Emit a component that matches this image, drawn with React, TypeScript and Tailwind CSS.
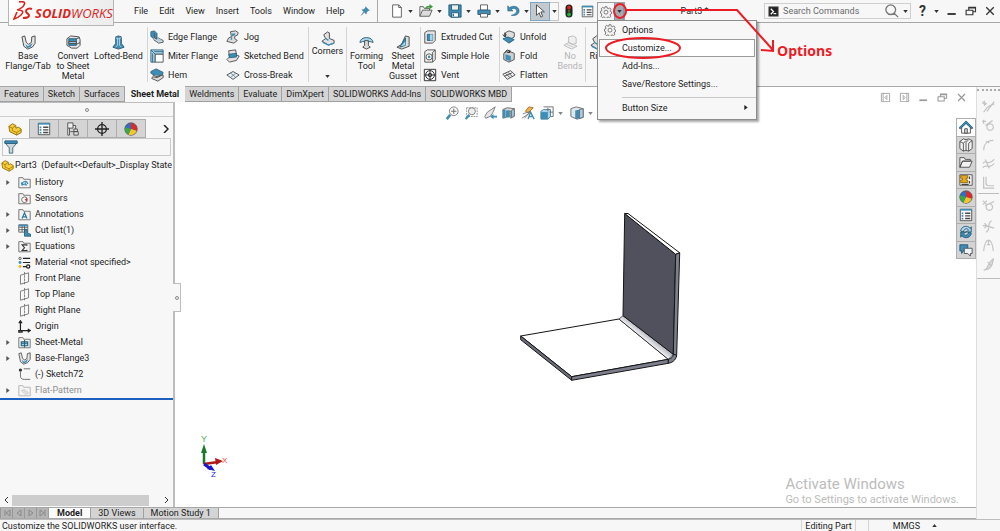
import { useState } from 'react';
import type { ReactNode } from 'react';

const S = '#4a4a4a';
const B = '#3d8db5';
const L = '#a9d3ea';

// All drawings share a 16x16 box
const icons: Record<string, ReactNode> = {
  base: (
    <>
      <path d="M1 2l3-1 1.500 6.500L8 10l3-2 .5-6L15 1v8l-3 4-5 2-4-3z" fill="#e4e4e4" stroke={S} />
      <path d="M4.500 9.500l3 2.500 5-3.500-2 4-4 1.500z" fill={B} />
    </>
  ),
  convert: (
    <>
      <path d="M1 4l4-3 9 1 1 3v6l-3 3H6l-5-3z" fill="#e8e8e8" stroke={S} />
      <path d="M3 4h8v7H3z" fill={B} stroke="#27607c" />
      <path d="M3 7h8v2H3zM11 4l3-1M11 10l4-2" fill={L} stroke={S} />
    </>
  ),
  loft: (
    <>
      <path d="M5 2l3-1 3 1v7l3 4-6 2-6-2 3-4z" fill={B} stroke="#39596b" />
      <path d="M7 3v8l-2 2M9 3v8l2 2M5 3l3 1 3-1" fill="none" stroke={L} />
    </>
  ),
  edge: (
    <>
      <path d="M1 2l4-1 3 3v6l-3 1-4-4z" fill={B} stroke="#2c637e" />
      <path d="M5 4v5l3 2 1-2 6 3v2l-5 1-6-4" fill="#dcdcdc" stroke={S} />
      <path d="M9 9l5 3-3 1-4-2z" fill={L} />
    </>
  ),
  miter: (
    <>
      <path d="M1 1h14v5H6v9H1z" fill={L} stroke="#2c637e" />
      <path d="M6 6h9v9H6z" fill="#fff" stroke={S} />
      <path d="M1 1l5 5M3 5v10M5 3h10" fill="none" stroke="#2c637e" />
    </>
  ),
  hem: (
    <>
      <path d="M1 4l6-3 8 4-1 3-7 1-6-3z" fill={B} stroke="#2c637e" />
      <path d="M3 8l5 2 7-2v3l-6 4-7-3 1-2 5 1 4-2" fill="#dcdcdc" stroke={S} />
    </>
  ),
  jog: (
    <>
      <path d="M5 2l6-1 3 2-1 3-3 1v3l3 2-4 3-8-2 2-4 3-1V6z" fill="#dcdcdc" stroke={S} />
      <path d="M6 4h5l-1 2-3 1v4H5l2-5z" fill={B} />
    </>
  ),
  sbend: (
    <>
      <path d="M3 2l8-1 1 6 3 1-3 5-8 2-3-3 3-3z" fill="#e2e2e2" stroke={S} />
      <path d="M3 6l9-1v4l-8 1z" fill={B} stroke="#2c637e" />
    </>
  ),
  cross: (
    <>
      <path d="M1 8l7-4 7 4-7 5z" fill="#e4eef2" stroke={S} />
      <path d="M5 5.500l6 5M11 6l-6 5" stroke="#6f8894" fill="none" />
    </>
  ),
  corners: (
    <>
      <path d="M4 4l4-3 2 1v6l5 2v3l-6 2-7-4 4-3z" fill="#e2e2e2" stroke={S} />
      <path d="M3 12l6 3 6-2M6 8l3 2" fill="none" stroke={B} strokeWidth="1.500" />
    </>
  ),
  forming: (
    <>
      <path d="M1 8c0-7 14-7 14 0l-3-1H4z" fill={L} stroke="#2c637e" />
      <path d="M6 6h4v5l2 2-4 2-4-2 2-2z" fill="#dadada" stroke={S} />
    </>
  ),
  gusset: (
    <>
      <path d="M10 1l4 1v10l-8 3-5-2 5-3z" fill="#dcdcdc" stroke={S} />
      <path d="M10 3v8l-6 2z" fill={B} stroke="#2c637e" />
      <path d="M5 12l5-5v4z" fill={L} />
    </>
  ),
  cut: (
    <>
      <path d="M2 3l3-2h9v11l-3 3H2z" fill="#e6e6e6" stroke={S} />
      <path d="M5 5h6v7H5z" fill={B} stroke="#2c637e" />
      <path d="M8 5h3v7H8z" fill={L} />
    </>
  ),
  hole: (
    <>
      <path d="M2 3l3-2h9v11l-3 3H2zM11 15V4l3-3" fill="#f0f0f0" stroke={S} />
      <circle cx="7" cy="9" r="3.500" fill="#fff" stroke={S} />
      <circle cx="7" cy="9" r="1.500" fill={B} />
    </>
  ),
  vent: (
    <>
      <path d="M1.500 1.500h13v13h-13z" fill="#f4f4f4" stroke="#222" />
      <circle cx="8" cy="8" r="5" fill="none" stroke="#222" />
      <circle cx="8" cy="8" r="2" fill="none" stroke="#222" />
      <path d="M8 2v12M2 8h12" stroke="#222" />
    </>
  ),
  unfold: (
    <>
      <path d="M4 3l4-2 6 2v5l-4 2-6-2z" fill="#dedede" stroke={S} />
      <path d="M1 10l6-2 7 3-6 4z" fill={B} stroke="#2c637e" />
      <path d="M3 3v4M1 5l2 3 2-3" fill="none" stroke="#333" />
    </>
  ),
  fold: (
    <>
      <path d="M2 5l5-3 7 3v7l-6 3-6-3z" fill="#cfcfcf" stroke={S} />
      <path d="M4 6l6 2v6l-6-2z" fill={B} />
      <path d="M3 4l3-3 3 2M9 1v3H6" fill="none" stroke="#222" />
    </>
  ),
  flatten: (
    <>
      <path d="M1 7l9-4 5 5-9 5z" fill="#eee" stroke={S} />
      <path d="M4 6l5 5M7 5l5 5M2.500 9.500l9-4" stroke={S} fill="none" />
    </>
  ),
  nobends: (
    <>
      <path d="M6 2l5-1 3 2v6l-4 1-4-2zM1 11l5-3 9 4-6 3z" fill="#efefef" stroke="#bbb" />
      <path d="M4 10l7 3" stroke="#c8c8c8" />
    </>
  ),
  newdoc: <path d="M3 1h7l3 3v11H3zM10 1v3h3" fill="#fff" stroke="#555" />,
  open: (
    <>
      <path d="M1 14V3h4l1 2h6v3" fill="#f3f3f3" stroke="#555" />
      <path d="M1 14l3-7h11l-3 7z" fill="#dcdcdc" stroke="#555" />
      <path d="M7 6c0-3 2-4 5-4V0l4 3-4 3V4c-2 0-3 0-5 2z" fill="#3c9a3c" />
    </>
  ),
  save: (
    <>
      <path d="M1 1h14v14H3l-2-2z" fill={B} stroke="#225a78" />
      <path d="M4 1h8v6H4z" fill="#eee" stroke="#225a78" />
      <path d="M4 10h8v5H4z" fill="#fff" stroke="#225a78" />
      <path d="M6 11v3" stroke="#225a78" strokeWidth="1.500" />
    </>
  ),
  print: (
    <>
      <path d="M4 1h8v6H4z" fill="#fff" stroke="#555" />
      <path d="M1 7h14v5H1z" fill={B} stroke="#225a78" />
      <path d="M4 11h8v4H4z" fill="#fff" stroke="#555" />
    </>
  ),
  undo: <path d="M2 2v6h6L6 6c4-2 7 0 6 3-1 2-3 3-6 4 6 1 9-2 9-5 0-5-6-7-11-4z" fill={B} stroke="#225a78" strokeWidth=".6" />,
  cursor: <path d="M4 1v12l3-3 2 5 2-1-2-5h4z" fill="#fff" stroke="#444" />,
  traffic: (
    <>
      <rect x="4" y="0.500" width="8" height="15" rx="4" fill="#222" />
      <circle cx="8" cy="4" r="2.200" fill="#e02020" />
      <circle cx="8" cy="8" r="1.500" fill="#5d5a20" />
      <circle cx="8" cy="12" r="2.200" fill="#1fae3a" />
    </>
  ),
  proplist: (
    <>
      <path d="M1.500 1.500h13v13h-13z" fill="#fff" stroke={S} />
      <path d="M1 1h14v2H1z" fill={B} />
      <path d="M3 6h2M3 9h2M3 12h2" stroke={B} strokeWidth="2" />
      <path d="M7 6h6M7 9h6M7 12h6" stroke={S} strokeWidth="1.500" />
    </>
  ),
  gear: (
    <>
      <path
        d="M6.700 1h2.600l.5 2 1.300.6 1.900-1.100 1.700 1.800-1 1.900.5 1.300 1.300.4v2.300l-1.500.5-.5 1.300 1 1.900-1.800 1.700-1.800-1-1.300.5-.4 1.400H6.800l-.5-1.500-1.300-.5-1.800 1.100-1.800-1.800 1-1.800L1.900 10 .6 9.500V7l1.500-.4.5-1.300-1-1.800 1.800-1.700 1.800 1L6.200 3z"
        fill="#f2f2f2"
        stroke="#555"
      />
      <circle cx="8" cy="8.200" r="2.600" fill="#fff" stroke="#555" />
    </>
  ),
  pin: <path d="M9 1l6 6-2 .5-2.500 2.500-.5 3-3-3-5 5 4-6-3-3 3-.5L8.500 3z" fill={B} stroke="#2b6f95" strokeWidth=".6" />,
  zoomfit: (
    <>
      <path d="M6 10l-4 5" stroke={B} strokeWidth="3" />
      <circle cx="10" cy="6" r="5" fill="#f6f6f6" stroke="#777" />
      <path d="M10 3v6M7 6h6" stroke="#666" />
    </>
  ),
  zoomarea: (
    <>
      <path d="M3 2h12v10H3z" fill="none" stroke="#888" strokeDasharray="2 1" />
      <path d="M6 10l-4 5" stroke={B} strokeWidth="2.500" />
      <circle cx="9" cy="6" r="4" fill="#eee" stroke="#777" />
    </>
  ),
  prevview: (
    <>
      <path d="M14 1L5 7l-3 5 1 2 5-2 3-4z" fill="#e5e5e5" stroke="#777" />
      <path d="M8 12l4-3v2h4v2h-4v2z" fill={B} />
    </>
  ),
  section: (
    <>
      <path d="M1 4l5-2 8 1v8l-4 3V6H5v7l-4 1z" fill="#d5d5d5" stroke="#666" />
      <path d="M5 5h4v8H5zM1 4h3v9H1z" fill={B} />
      <path d="M11 5l3-2v9l-3 1z" fill={L} stroke="#666" />
    </>
  ),
  annview: (
    <>
      <path d="M5 6l4-5 5 1-6 6z" fill="#f0b34c" stroke="#a26a1c" />
      <path d="M2 9l9-3-7 8M1 14l9-6" fill="none" stroke="#777" />
      <path d="M8 15l3-8 4 8M9 12h5" fill="none" stroke={B} strokeWidth="1.500" />
    </>
  ),
  orient: (
    <>
      <path d="M4 1h11v11h-4" fill="none" stroke="#666" />
      <path d="M1 6l3-2h8v8l-3 3H1z" fill={L} stroke="#4e7f99" />
      <path d="M1 7h8v8H1z" fill={B} />
      <path d="M9 2v4M15 7h-4" stroke="#666" />
    </>
  ),
  cube: (
    <>
      <path d="M1 3l6-2 8 2v10l-7 2-7-3z" fill="#dfe7eb" stroke="#666" />
      <path d="M6 5l5-1v9l-3 2-2-1z" fill={B} />
      <path d="M11 4l4-1v10l-4 1z" fill={L} stroke="#666" />
    </>
  ),
  part: (
    <>
      <path d="M1 5l4-3 4 2v3l3-1 3 2v4l-5 3-8-4z" fill="#f7cf3c" stroke="#8a6500" />
      <path d="M1 5l4 2 4-3M5 7v3l5 2 5-3M10 12v3" fill="none" stroke="#a67b00" />
    </>
  ),
  config: (
    <>
      <path d="M2 1h6v6H2zM4 7v8H2V7M8 4h3v4M5 11h4" fill="#eee" stroke={S} />
      <path d="M9 8h4v3H9zM9 11h5v4H9z" fill="#ddd" stroke={S} />
    </>
  ),
  target: (
    <>
      <circle cx="8" cy="8" r="5" fill="none" stroke="#222" strokeWidth="1.500" />
      <path d="M8 0v16M0 8h16" stroke="#222" strokeWidth="1.500" />
    </>
  ),
  ball: (
    <>
      <circle cx="8" cy="8" r="7" fill="#2b70c9" stroke="#444" />
      <path d="M8 8V1a7 7 0 0 1 6.500 9z" fill="#de2b23" />
      <path d="M8 8l6.500 2A7 7 0 0 1 5 14.300z" fill="#f5c52c" />
      <path d="M8 8l-3 6.300A7 7 0 0 1 1.500 6z" fill="#3fa646" />
    </>
  ),
  funnel: (
    <>
      <path d="M1 3h14l-5 6v6H6V9z" fill="#cfd6d9" stroke="#33667f" />
      <path d="M1 1h14v3H1z" fill={B} stroke="#225a78" />
    </>
  ),
  material: (
    <>
      <path d="M6 3h9M6 8h9M6 13h4" stroke="#222" strokeWidth="1.500" />
      <circle cx="2.500" cy="3" r="1.500" fill="#ddd" stroke="#555" />
      <circle cx="2.500" cy="8" r="1.800" fill={B} />
      <circle cx="2.500" cy="13" r="1.800" fill="#f1b81f" />
      <circle cx="12.500" cy="13" r="2" fill="#fff" stroke="#222" strokeWidth="1.500" />
    </>
  ),
  plane: (
    <>
      <path d="M3 4l10-3v11L3 15z" fill="none" stroke="#666" />
      <path d="M8 0v16" stroke="#666" strokeDasharray="3 1" />
    </>
  ),
  origin: <path d="M3 2v11h11M1 4l2-3 2 3M12 11l3 2-3 2M1 13h4v2H1z" fill="none" stroke="#222" strokeWidth="1.500" />,
  sketch: (
    <>
      <path d="M15 1H7M3 5v5c0 3 2 4 5 4h7" fill="none" stroke="#555" />
      <circle cx="3" cy="2.500" r="2" fill="#333" />
    </>
  ),
  cutlist: (
    <>
      <path d="M1 1h11v9H1zM1 4h11M1 7h11M5 1v9M8 1v9" fill="#fff" stroke={S} />
      <path d="M1 1h11v2H1z" fill={B} />
      <path d="M8 7l2-1 2 5 4 2v2H8z" fill={B} stroke="#225a78" />
    </>
  ),
  home: (
    <>
      <path d="M3 8v7h10V8L8 3z" fill="#fff" stroke="#444" />
      <path d="M0 9l8-8 8 8-1.500 1L8 4l-6.500 6z" fill={B} stroke="#225a78" />
      <path d="M6.500 10h3v5h-3z" fill="#ddd" stroke="#444" />
    </>
  ),
  library: (
    <>
      <path d="M1 4l4-3 3 1 3-1 4 2v9l-4 3-3-1-3 1-4-3z" fill="#f4f4f4" stroke={S} />
      <path d="M1 4l4 2v9M5 6l3-3M8 5v9M8 5l3-3M11 6v9M11 6l4-3" fill="none" stroke={S} />
    </>
  ),
  folder: <path d="M1 14V3h5l1 2h6v2H4zL4 7h11l-3 7z" fill="#f2f2f2" stroke={S} />,
  palette: (
    <>
      <path d="M1 2h14v12H1z" fill="#fff" stroke={S} />
      <path d="M2 3h8v3H8v2h2v3H2V8h2V6H2z" fill="#e6ac20" stroke="#916500" />
      <path d="M12 4v3M12 9v3M3 13h8" stroke="#444" strokeWidth="1.500" />
    </>
  ),
  recycle: (
    <>
      <path d="M2 7c0-5 7-8 11-3l1-2v6H8l3-2C9 3 6 4 5 8z" fill={L} stroke="#225a78" />
      <path d="M14 9c0 5-7 8-11 3l-1 2V8h6l-3 2c2 3 5 2 6-2z" fill={B} stroke="#225a78" />
    </>
  ),
  chat: (
    <>
      <path d="M1 2h9v7H5l-2 3V9H1z" fill={B} stroke="#225a78" />
      <path d="M6 6h9v6h-2v3l-3-3H6z" fill="#eef5f8" stroke={S} />
    </>
  ),
  minimize: <path d="M2 12h11" stroke="currentColor" strokeWidth="2.500" />,
  restore: <path d="M1.500 7h9v6h-9zM5 7V3h9v6h-3.500M5 4h9" fill="none" stroke="currentColor" strokeWidth="1.500" />,
  close: <path d="M3 3l10 10M13 3L3 13" fill="none" stroke="currentColor" strokeWidth="1.800" />,
  docprev: <path d="M2 2h12v12H2zM4.500 2v12M10 5L7 8l3 3z" fill="none" stroke="currentColor" strokeWidth="1.200" />,
  docnext: <path d="M2 2h12v12H2zM11.500 2v12M6 5l3 3-3 3z" fill="none" stroke="currentColor" strokeWidth="1.200" />,
  search: <path d="M10.500 10.500L15 15M6.500 1a5.500 5.500 0 1 0 .1 0z" fill="none" stroke="#777" strokeWidth="1.500" />,
  prompt: (
    <>
      <path d="M1 1h14v14H1z" fill="#222" stroke="#777" />
      <path d="M4 4l4 4-4 4M8 11h4" fill="none" stroke="#fff" strokeWidth="1.800" />
    </>
  ),
  s1: <path d="M2 15C5 12 5 7 15 5M6 14L15 2M3 1v6M0 4h6M1 2l4 4" fill="none" stroke="currentColor" strokeWidth="1.500" />,
  s2: <path d="M2 1v5M0 3h5M13 2L4 8M10 6a4 4 0 1 0 .1 0" fill="none" stroke="currentColor" strokeWidth="1.500" />,
  s3: <path d="M2 15C2 8 6 3 14 3M5 4l4 2" fill="none" stroke="currentColor" strokeWidth="1.500" />,
  s4: <path d="M1 8c4-6 7 4 14-5M1 13c4-6 7 4 14-5M4 3l5 11" fill="none" stroke="currentColor" strokeWidth="1.500" />,
  s5: <path d="M2 1v14h13M5 1v8c0 2 1 3 3 3h7" fill="none" stroke="currentColor" strokeWidth="1.500" />,
  s6: <path d="M1 2l5 5M6 2L1 7M15 3L4 8M9 6a4 4 0 1 0 .1 0" fill="none" stroke="currentColor" strokeWidth="1.500" />,
  s7: <path d="M12 1C5 4 12 11 5 15M1 7c5-1 9 2 14 3M3 4l3 3-3 3" fill="none" stroke="currentColor" strokeWidth="1.500" />,
  s8: <path d="M2 15C4-3 12-3 14 15M8 2v4M6 7h4" fill="none" stroke="currentColor" strokeWidth="1.500" />,
  s9: <path d="M2 15c6 0 4-9 12-14-1 8-3 13-12 14zM7 5l5 5" fill="#ddd" stroke="currentColor" strokeWidth="1.500" />,
};

const folderBase = <path d="M1 14.500V2h5l1 2h8v10.500z" fill="#f3f3f3" stroke="#777" strokeWidth="1.200" />;
icons.history = <>{folderBase}<path d="M5 11c0-5 6-6 7-1M4 8l1 3 3-1M9 8v3h2" fill="none" stroke={B} strokeWidth="1.500" /></>;
icons.sensors = <>{folderBase}<circle cx="8" cy="9.500" r="3.500" fill="#fff" stroke="#555" /><path d="M8 9.500l3-2v4z" fill="#d22" /></>;
icons.annotations = <>{folderBase}<path d="M5 13l3-7 3 7M6 11h4" fill="none" stroke="#2876a0" strokeWidth="1.500" /></>;
icons.equations = <>{folderBase}<path d="M11 7V6H5l3 3.500L5 13h6v-1" fill="none" stroke="#333" strokeWidth="1.300" /></>;
icons.sheetmetal = <>{folderBase}<path d="M4 7h8v5H4zM8 5v9M4 9h8" fill={L} stroke="#27607c" strokeWidth="1.300" /></>;
icons.flat = <>{folderBase}<path d="M4 8l4-1 5 4-4 2zM6 7l5 5" fill="#ddd" stroke="#999" /></>;

const Icon = ({ name, className = 'size-[14px]' }: { name: string; className?: string }) => (
  <svg viewBox="0 0 16 16" className={`shrink-0 ${className}`} aria-hidden="true">
    {icons[name]}
  </svg>
);

const Caret = ({ className = '' }: { className?: string }) => (
  <svg viewBox="0 0 6 4" className={`h-[3px] w-[5px] shrink-0 ${className}`} aria-hidden="true">
    <path d="M0 0h6L3 4z" fill="#333" />
  </svg>
);

const BigButton = ({ icon, lines, className = '' }: { icon: string; lines: string[]; className?: string }) => (
  <button className={`flex shrink-0 flex-col items-center pt-3 ${className}`}>
    <Icon name={icon} className="mb-px size-[15px]" />
    {lines.map((line) => (
      <span key={line} className="leading-[10px]">{line}</span>
    ))}
  </button>
);

const ToolColumn = ({ items, className = '' }: { items: [string, string][]; className?: string }) => (
  <div className={`flex shrink-0 flex-col pt-1 ${className}`}>
    {items.map(([icon, label]) => (
      <button key={label} className="flex h-[19px] items-center gap-1">
        <Icon name={icon} />
        {label}
      </button>
    ))}
  </div>
);

const Divider = () => <div className="my-1 w-px shrink-0 bg-[#d4d4d4]" />;

const ribbonTabs = ['Features', 'Sketch', 'Surfaces', 'Sheet Metal', 'Weldments', 'Evaluate', 'DimXpert', 'SOLIDWORKS Add-Ins', 'SOLIDWORKS MBD'];

const treeItems = [
  { icon: 'history', label: 'History', expand: true },
  { icon: 'sensors', label: 'Sensors' },
  { icon: 'annotations', label: 'Annotations', expand: true },
  { icon: 'cutlist', label: 'Cut list(1)', expand: true },
  { icon: 'equations', label: 'Equations', expand: true },
  { icon: 'material', label: 'Material <not specified>' },
  { icon: 'plane', label: 'Front Plane' },
  { icon: 'plane', label: 'Top Plane' },
  { icon: 'plane', label: 'Right Plane' },
  { icon: 'origin', label: 'Origin' },
  { icon: 'sheetmetal', label: 'Sheet-Metal', expand: true },
  { icon: 'base', label: 'Base-Flange3', expand: true },
  { icon: 'sketch', label: '(-) Sketch72' },
  { icon: 'flat', label: 'Flat-Pattern', expand: true, muted: true },
];

const Logo = () => (
  <div className="relative z-10 ml-2 flex h-[26px] w-[106px] shrink-0 items-center gap-[2px] self-start border border-t-0 border-[#b5b5b5] bg-gradient-to-r from-white to-[#ececec] pl-1 text-[#d9261c]">
    <svg viewBox="0 0 20 20" className="mb-1 size-5 shrink-0" fill="none" stroke="currentColor" aria-hidden="true">
      <path d="M6 1c4-1 7 0 5 3-1 2-4 4-7 5" strokeWidth="1.600" />
      <path d="M5 9c5 0 6 2 3 5-2 2-4 3-7 4l3-7" strokeWidth="1.600" />
      <path d="M19 8c-3-1-6 0-6 2 0 3 4 3 3 5-1 2-4 2-6 2" strokeWidth="2" />
    </svg>
    <span className="font-['Open_Sans',sans-serif] text-[13px] italic leading-4">
      <b>SOLID</b>WORKS
    </span>
  </div>
);

const OptionsMenu = () => (
  <div className="absolute -left-px top-[17px] z-20 flex w-[160px] flex-col border border-[#8c8c8c] bg-[#f7f7f7] pb-px shadow-[2px_2px_2px_rgba(0,0,0,0.35)]">
    {['Options', 'Customize...', 'Add-Ins...', 'Save/Restore Settings...'].map((label) => (
      <button
        key={label}
        className={`mx-px flex h-[18px] items-center gap-1 border pl-1 ${label === 'Customize...' ? 'border-[#9a9a9a] bg-white' : 'border-transparent'}`}
      >
        <span className="w-[14px]">{label === 'Options' && <Icon name="gear" className="size-3" />}</span>
        {label}
      </button>
    ))}
    <hr className="ml-6 mt-1 border-[#c8c8c8]" />
    <button className="flex h-5 items-center pl-6 pr-2">
      <span className="flex-1 text-left">Button Size</span>
      <svg viewBox="0 0 4 6" className="h-[5px] w-[4px]" aria-hidden="true"><path d="M0 0l4 3-4 3z" fill="#222" /></svg>
    </button>
  </div>
);

// Red mark-up drawn over the options button and its menu
const Callout = () => (
  <div className="pointer-events-none absolute left-0 top-0 z-30 h-[64px] w-[240px] text-[#ed1c24]">
    <svg viewBox="0 0 240 64" className="absolute inset-0" fill="none" stroke="currentColor" strokeWidth="2" aria-hidden="true">
      <ellipse cx="22" cy="8" rx="6" ry="7" />
      <path d="M28 7h111l36 40M175 37v11l-12-1" />
      <ellipse cx="45" cy="45" rx="37" ry="10" />
    </svg>
    <span className="absolute left-[179px] top-[38px] font-['Open_Sans',sans-serif] text-[14px] font-bold leading-5">Options</span>
  </div>
);

const TitleBar = () => (
  <header className="flex h-[23px] shrink-0 items-center border-b border-[#a8a8a8] bg-[#f7f7f7]">
    <Logo />
    <nav className="flex w-[263px] shrink-0 items-center gap-[11px] pl-5">
      {['File', 'Edit', 'View', 'Insert', 'Tools', 'Window', 'Help'].map((m) => (
        <button key={m}>{m}</button>
      ))}
      <button aria-label="Pin" className="ml-auto mr-[7px]"><Icon name="pin" className="size-[10px]" /></button>
    </nav>
    <div className="flex h-full w-[220px] shrink-0 items-center border-l border-[#a8a8a8] pl-3">
      {['newdoc', 'open', 'save', 'print', 'undo'].map((name) => (
        <button key={name} aria-label={name} className="flex w-[29px] shrink-0 items-center gap-1">
          <Icon name={name} />
          <Caret />
        </button>
      ))}
      <button aria-label="Select" className="ml-[-5px] flex h-[19px] w-5 shrink-0 items-center justify-center border border-[#7aa7c7] bg-[#c4c9ce]">
        <Icon name="cursor" />
      </button>
      <button aria-label="Select options" className="flex h-[19px] w-[9px] items-center justify-center border border-l-0 border-[#c4c4c4]"><Caret /></button>
      <button aria-label="Rebuild" className="ml-[3px]"><Icon name="traffic" /></button>
      <button aria-label="File properties" className="ml-[5px]"><Icon name="proplist" className="size-[13px]" /></button>
    </div>
    <div className="relative flex h-[19px] w-7 shrink-0 border border-b-0 border-[#a0a0a0]">
      <button aria-label="Options" className="flex w-4 items-center justify-center"><Icon name="gear" className="size-3" /></button>
      <button aria-label="Options list" className="flex flex-1 items-center justify-center border-x border-[#6a9dc4] bg-[#a5a9ad]"><Caret /></button>
      <OptionsMenu />
      <Callout />
    </div>
    <span className="flex-1 text-center">Part3 *</span>
    <label className="flex h-4 w-[147px] shrink-0 items-center gap-1 border border-[#cfcfcf] pl-[3px] pr-[2px]">
      <Icon name="prompt" className="size-[11px]" />
      <input placeholder="Search Commands" aria-label="Search Commands" className="min-w-0 flex-1 bg-transparent outline-none placeholder:text-[#6b6b6b]" />
      <Icon name="search" />
      <Caret />
    </label>
    <div className="flex shrink-0 items-center gap-[7px] pl-2 pr-1 text-[#333]">
      <button aria-label="Help" className="flex items-center gap-2 text-[14px] font-bold">?<Caret /></button>
      <button aria-label="Minimize"><Icon name="minimize" className="size-3" /></button>
      <button aria-label="Restore"><Icon name="restore" className="size-3" /></button>
      <button aria-label="Close"><Icon name="close" className="size-3" /></button>
    </div>
  </header>
);

const Ribbon = () => (
  <section className="flex h-[64px] shrink-0 overflow-hidden border-b border-[#a8a8a8] bg-[#f7f7f7]">
    <BigButton icon="base" lines={['Base', 'Flange/Tab']} className="w-[56px]" />
    <BigButton icon="convert" lines={['Convert', 'to Sheet', 'Metal']} className="w-[34px]" />
    <BigButton icon="loft" lines={['Lofted-Bend']} className="w-[57px]" />
    <Divider />
    <ToolColumn items={[['edge', 'Edge Flange'], ['miter', 'Miter Flange'], ['hem', 'Hem']]} className="w-[76px] pl-[2px]" />
    <ToolColumn items={[['jog', 'Jog'], ['sbend', 'Sketched Bend'], ['cross', 'Cross-Break']]} className="w-[84px] pl-[2px]" />
    <Divider />
    <button className="flex w-[37px] shrink-0 flex-col items-center pt-2">
      <Icon name="corners" className="size-[15px]" />
      <span className="leading-[10px]">Corners</span>
      <Caret className="mt-[19px]" />
    </button>
    <Divider />
    <BigButton icon="forming" lines={['Forming', 'Tool']} className="w-[39px]" />
    <BigButton icon="gusset" lines={['Sheet', 'Metal', 'Gusset']} className="w-[34px]" />
    <Divider />
    <ToolColumn items={[['cut', 'Extruded Cut'], ['hole', 'Simple Hole'], ['vent', 'Vent']]} className="w-[78px] pl-[2px]" />
    <Divider />
    <ToolColumn items={[['unfold', 'Unfold'], ['fold', 'Fold'], ['flatten', 'Flatten']]} className="w-[55px] pl-[2px]" />
    <BigButton icon="nobends" lines={['No', 'Bends']} className="w-[30px] text-[#b4b4b4]" />
    <Divider />
    <BigButton icon="corners" lines={['Rip']} className="w-5" />
  </section>
);

const FeatureTree = () => (
  <aside className="relative z-10 flex w-[175px] shrink-0 flex-col border-r-2 border-t border-[#bdbdbd] bg-[#f7f7f7]">
    <div className="flex h-[14px] items-center justify-center border-b border-[#cfcfcf]">
      <span className="size-1 rounded-full border border-[#888]" />
    </div>
    <div className="mt-[2px] flex h-[19px] shrink-0">
      {['part', 'proplist', 'config', 'target', 'ball'].map((name, i) => (
        <button
          key={name}
          aria-label={name}
          className={`flex w-[29px] items-center justify-center border-[#adadad] ${i === 0 ? '' : 'border border-r-0 bg-[#d4d4d4]'}`}
        >
          <Icon name={name} />
        </button>
      ))}
      <div className="w-px bg-[#adadad]" />
      <button aria-label="More" className="ml-auto mr-1 flex items-center">
        <svg viewBox="0 0 6 8" className="h-2 w-[6px]" fill="none" stroke="#222" strokeWidth="1.500" aria-hidden="true"><path d="M1 0l4 4-4 4" /></svg>
      </button>
    </div>
    <label className="mx-[2px] flex h-[18px] shrink-0 items-center border border-[#c9c9c9] pl-px">
      <Icon name="funnel" />
      <input aria-label="Filter" className="min-w-0 flex-1 bg-transparent outline-none" />
    </label>
    <div className="flex h-[18px] shrink-0 items-center gap-px whitespace-pre pl-px">
      <Icon name="part" className="size-[13px]" />
      Part3  (Default&lt;&lt;Default&gt;_Display State
    </div>
    <ul className="border-b-2 border-[#1f5fc0]">
      {treeItems.map((item) => (
        <li key={item.label} className={`flex h-4 items-center gap-1 pl-[6px] ${item.muted ? 'text-[#8f8f8f]' : ''}`}>
          <svg viewBox="0 0 4 6" className="mr-1 h-[5px] w-[4px]" aria-hidden="true">{item.expand && <path d="M0 0l4 3-4 3z" fill="#555" />}</svg>
          <Icon name={item.icon} className={`size-[13px] ${item.muted ? 'opacity-50' : ''}`} />
          {item.label}
        </li>
      ))}
    </ul>
    <div className="mt-auto flex h-[14px] items-center justify-between px-1">
      <svg viewBox="0 0 4 6" className="h-[6px] w-1" fill="none" stroke="#333" aria-hidden="true"><path d="M4 0L1 3l3 3" /></svg>
      <div className="ml-1 mr-4 h-[11px] flex-1 bg-[#cdcdcd]" />
      <svg viewBox="0 0 4 6" className="h-[6px] w-1" fill="none" stroke="#333" aria-hidden="true"><path d="M0 0l3 3-3 3" /></svg>
    </div>
    <button aria-label="Collapse panel" className="absolute -right-2 top-[180px] flex h-[29px] w-2 items-center justify-center border border-l-0 border-[#bdbdbd] bg-[#f7f7f7]">
      <span className="size-1 rounded-full border border-[#888]" />
    </button>
  </aside>
);

const SheetPart = () => (
  <svg viewBox="515 208 170 178" className="absolute left-[340px] top-[106px] h-[178px] w-[170px]" stroke="#151515" strokeLinejoin="round" aria-label="Bent sheet metal part">
    <defs>
      <linearGradient id="bend" x1="0.400" y1="0.600" x2=".6" y2="0.400">
        <stop offset="0.200" stopColor="#ffffff" />
        <stop offset="1" stopColor="#9295a5" />
      </linearGradient>
    </defs>
    <path d="M520.700 336L619 319l49.300 40.300-96.600 17.400z" fill="#fff" />
    <path d="M619 319l4-3.300 50.300 38.600-5 5z" fill="url(#bend)" strokeWidth=".7" />
    <path d="M520.700 336l51 40.700v3.600l-51-40.600z" fill="#6b6d7a" />
    <path d="M571.700 376.700l96.600-17.400v4l-96.600 17z" fill="#7d7f8d" />
    <path d="M624.700 213.500l51 40.800-2.400 100-50.300-38.600z" fill="#50515c" />
    <path d="M624.700 213.500h3.300l51.700 39.300-4 1.500z" fill="#fff" />
    <path d="M675.700 254.300l4-1.500-3 101.700c0 4-3 8-8.400 8.800v-4c3-1 5-2 5-5z" fill="#7d7f8d" />
    <path d="M673.300 354.300l3.400.7" />
  </svg>
);

const Triad = () => (
  <svg viewBox="0 0 32 46" className="absolute bottom-[28px] left-[24px] h-[46px] w-8" aria-hidden="true">
    <path d="M5 31V18" stroke="#187a2a" strokeWidth="2.500" />
    <path d="M2 20l3-9 3 9z" fill="#187a2a" />
    <path d="M5 31l14-2" stroke="#b01818" strokeWidth="2.500" />
    <path d="M16 25l8 3-7 4z" fill="#b01818" />
    <path d="M5 31l7 5" stroke="#1818c8" strokeWidth="3" />
    <path d="M8 36l4-4 4 6z" fill="#1818c8" />
    <text x="2" y="9" fontSize="9" fill="#4caf50" fontFamily="Liberation Sans">Y</text>
    <text x="23" y="30" fontSize="8" fill="#f04040" fontFamily="Liberation Sans">X</text>
    <text x="12" y="44" fontSize="8" fill="#2020e0" fontFamily="Liberation Sans">Z</text>
  </svg>
);

const Viewport = () => (
  <main className="relative min-w-0 flex-1 overflow-hidden bg-white">
    <div className="flex items-center pl-[270px] pt-1">
      {['zoomfit', 'zoomarea', 'prevview', 'section', 'annview'].map((name) => (
        <button key={name} aria-label={name} className="w-[19px] shrink-0"><Icon name={name} /></button>
      ))}
      {['orient', 'cube', 'section', 'ball'].map((name, i) => (
        <button key={name + i} aria-label={`${name} view`} className="flex w-[30px] shrink-0 items-center gap-1"><Icon name={name} /><Caret className="opacity-60" /></button>
      ))}
    </div>
    <SheetPart />
    <Triad />
    <div className="absolute right-0 top-4 flex h-[141px] w-5 flex-col border border-b-0 border-[#adadad]">
      {['home', 'library', 'folder', 'palette', 'ball', 'proplist', 'recycle', 'chat'].map((name, i) => (
        <button key={name} aria-label={`${name} pane`} className={`flex flex-1 items-center justify-center border-b border-[#adadad] ${i === 0 ? 'bg-white' : 'bg-[#d4d4d4]'}`}>
          <Icon name={name} />
        </button>
      ))}
    </div>
    <div className="absolute bottom-0 right-[17px] text-[#bcbcbc]">
      <p className="text-[15px] leading-[18px]">Activate Windows</p>
      <p className="text-[11px] leading-[14px]">Go to Settings to activate Windows.</p>
    </div>
  </main>
);

const SketchBar = () => (
  <aside className="flex w-6 shrink-0 flex-col items-center border-l border-[#dedede] bg-[#f7f7f7] text-[#c4c4c4]">
    <div className="mb-[6px] mt-[2px] w-full border-t-2 border-dotted border-[#aaa]" />
    {['s1', 's2', 's3', 's4', 's5', 's6', 's7', 's8', 's9'].map((name) => (
      <button key={name} aria-label={name} className={`flex items-center ${name === 's6' ? 'mt-px h-6 border-t border-[#bdbdbd] px-1' : 'h-[19px]'}`}>
        <Icon name={name} className="size-[13px]" />
      </button>
    ))}
    <div className="mt-1 w-full border-t border-[#bdbdbd]" />
  </aside>
);

export default function App() {
  const [activeTab, setActiveTab] = useState('Sheet Metal');
  const [activeView, setActiveView] = useState('Model');

  return (
    <div className="flex h-screen flex-col overflow-hidden whitespace-nowrap bg-[#f7f7f7] font-['Roboto','Open_Sans',sans-serif] text-[9px] leading-3 text-[#1e1e1e]">
      <TitleBar />
      <Ribbon />
      <div className="flex min-h-0 flex-1">
        <div className="flex min-w-0 flex-1 flex-col">
          {/* Ribbon tabs and document window controls */}
          <div className="flex h-[15px] shrink-0 bg-white">
            {ribbonTabs.map((tab) => (
              <button
                key={tab}
                onClick={() => setActiveTab(tab)}
                className={`shrink-0 ${activeTab === tab ? 'relative -mt-px bg-[#f7f7f7] px-[6px] font-bold' : 'border-b border-r border-[#a0a0a0] bg-[#d4d4d4] px-1'}`}
              >
                {tab}
              </button>
            ))}
            <div className="ml-auto flex items-center gap-2 pr-[9px] pt-[6px] text-[#999]">
              {['docprev', 'docnext', 'minimize', 'restore', 'close'].map((name) => (
                <button key={name} aria-label={`document ${name}`}><Icon name={name} className="size-[11px]" /></button>
              ))}
            </div>
          </div>
          <div className="flex min-h-0 flex-1">
            <FeatureTree />
            <Viewport />
          </div>
          {/* Model / motion study tabs */}
          <div className="flex h-3 shrink-0 border-y border-[#a8a8a8] bg-[#f7f7f7] leading-[10px]">
            <div className="flex w-[49px] shrink-0 border-r border-[#a0a0a0] bg-[#b4b4b4]">
              {['M3 1v6M8 1L4 4l4 3z', 'M7 1L3 4l4 3z', 'M3 1l4 3-4 3z', 'M7 1v6M2 1l4 3-4 3z'].map((d) => (
                <button key={d} aria-label="Scroll tabs" className="flex flex-1 items-center justify-center border-l border-[#999]">
                  <svg viewBox="0 0 10 8" className="h-2 w-[10px]" fill="none" stroke="#888" aria-hidden="true"><path d={d} /></svg>
                </button>
              ))}
            </div>
            {['Model', '3D Views', 'Motion Study 1'].map((view) => (
              <button
                key={view}
                onClick={() => setActiveView(view)}
                className={`shrink-0 border-r border-[#a0a0a0] ${activeView === view ? 'bg-[#fbfbfb] px-2 font-bold' : 'bg-[#d4d4d4] px-[7px]'}`}
              >
                {view}
              </button>
            ))}
          </div>
        </div>
        <SketchBar />
      </div>
      <footer className="flex h-3 shrink-0 items-center border-t border-[#bdbdbd] pl-[2px]">
        <span className="flex-1">Customize the SOLIDWORKS user interface.</span>
        <span className="border-x border-[#d4d4d4] px-[3px]">Editing Part</span>
        <span className="ml-3 flex items-center gap-3 border-l border-[#d4d4d4] pl-6 pr-[63px]">
          MMGS
          <Caret className="rotate-180" />
        </span>
      </footer>
    </div>
  );
}
